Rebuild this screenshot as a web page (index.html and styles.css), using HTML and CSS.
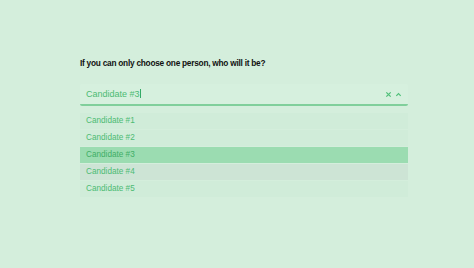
FILE: index.html
```html
<!DOCTYPE html>
<html lang="en">
<head>
  <meta charset="UTF-8"/>
  <title>Select</title>
  <link rel="stylesheet" href="styles.css">
</head>
<body>
  <div class="wrap">
    <p class="question">If you can only choose one person, who will it be?</p>
    <div class="select">
      <span class="value">Candidate #3<span class="caret"></span></span>
      <span class="icons">
        <svg width="7" height="7" viewBox="0 0 8 8"><path d="M1.5 1.5 L6.5 6.5 M6.5 1.5 L1.5 6.5" stroke="#4fbf78" stroke-width="1.4" fill="none"/></svg>
        <svg width="7" height="7" viewBox="0 0 8 8"><path d="M1.5 5.5 L4 3 L6.5 5.5" stroke="#4fbf78" stroke-width="1.4" fill="none"/></svg>
      </span>
    </div>
    <ul class="options">
      <li>Candidate #1</li>
      <li>Candidate #2</li>
      <li class="selected">Candidate #3</li>
      <li class="hover">Candidate #4</li>
      <li>Candidate #5</li>
    </ul>
  </div>
</body>
</html>
```

FILE: styles.css
```css
body { margin: 0; background-color: #d4eedc; font-family: "Liberation Sans", Arial, sans-serif; }
.wrap { width: 328px; padding: 58px 0 0 80px; }
.question { margin: 0; font-size: 8.3px; letter-spacing: -0.25px; font-weight: bold; color: #111; }
.select {
  margin-top: 16px;
  height: 20px;
  background-color: #d6f0de;
  border-bottom: 2px solid #80cf9b;
  border-radius: 2px;
  display: flex;
  align-items: center;
  justify-content: space-between;
  padding: 0 6px 0 6px;
}
.value { font-size: 9px; color: #4cbb73; }
.caret { display: inline-block; width: 1px; height: 9px; background: #3a6; vertical-align: -1px; }
.icons { display: flex; gap: 3px; }
.options { list-style: none; margin: 7px 0 0; padding: 0; display: flex; flex-direction: column; gap: 1px; }
.options li {
  height: 16px;
  line-height: 16px;
  padding: 0 6px;
  font-size: 8.2px;
  color: #4cbb73;
  background-color: #d0ecd9;
}
.options li.selected { background-color: #9bdcb1; color: #3fae66; }
.options li.hover { background-color: #cde4d5; }
```
